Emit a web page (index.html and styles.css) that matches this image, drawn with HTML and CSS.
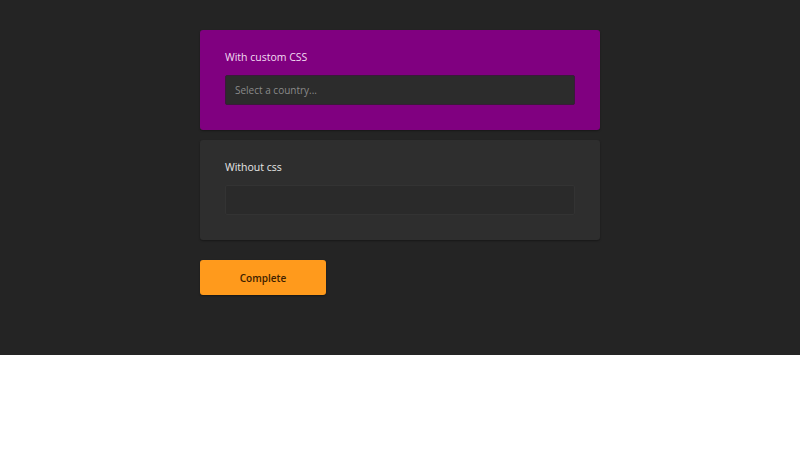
FILE: index.html
```html
<!DOCTYPE html>
<html>
<head>
<meta charset="utf-8">
<link rel="stylesheet" href="styles.css">
</head>
<body>
<div class="page">
  <div class="form">
    <div class="panel panel-custom">
      <label class="label">With custom CSS</label>
      <div class="select select-custom"><span class="placeholder">Select a country...</span></div>
    </div>
    <div class="panel panel-plain">
      <label class="label">Without css</label>
      <div class="select select-plain"></div>
    </div>
    <button class="btn">Complete</button>
  </div>
</div>
</body>
</html>
```
FILE: styles.css
```css
html, body {
  margin: 0;
  padding: 0;
  background: #ffffff;
}
.page {
  background: #242424;
  height: 355px;
  padding-top: 30px;
  box-sizing: border-box;
  font-family: "Open Sans", "Noto Sans", sans-serif;
}
.form {
  width: 400px;
  margin: 0 auto;
  display: flex;
  flex-direction: column;
}
.panel {
  border-radius: 3px;
  padding: 19px 25px 25px;
  display: flex;
  flex-direction: column;
  height: 100px;
  box-sizing: border-box;
  margin-bottom: 10px;
  box-shadow: 0 1px 2px rgba(0,0,0,0.35);
}
.panel-custom {
  background: #800080;
}
.panel-plain {
  background: #2e2e2e;
}
.label {
  font-size: 10.5px;
  font-weight: 500;
  line-height: 16px;
  color: #e6e6e6;
  margin-bottom: 10px;
}
.panel-custom .label {
  color: #f2dcf2;
}
.select {
  height: 30px;
  box-sizing: border-box;
  border-radius: 2px;
  display: flex;
  align-items: center;
  padding: 0 9px;
}
.select-custom {
  background: #2c2c2c;
  border: 1px solid #3a1a3a;
}
.select-plain {
  background: #2a2a2a;
  border: 1px solid #333333;
}
.placeholder {
  font-size: 10px;
  color: #8a8a8a;
}
.btn {
  margin-top: 10px;
  align-self: flex-start;
  width: 126px;
  height: 35px;
  background: #ff9a1c;
  border: none;
  border-radius: 3px;
  font-family: "Open Sans", "Noto Sans", sans-serif;
  font-size: 10px;
  font-weight: 600;
  color: #3d1e00;
  box-shadow: 0 1px 2px rgba(0,0,0,0.4);
  padding: 0;
}
```
